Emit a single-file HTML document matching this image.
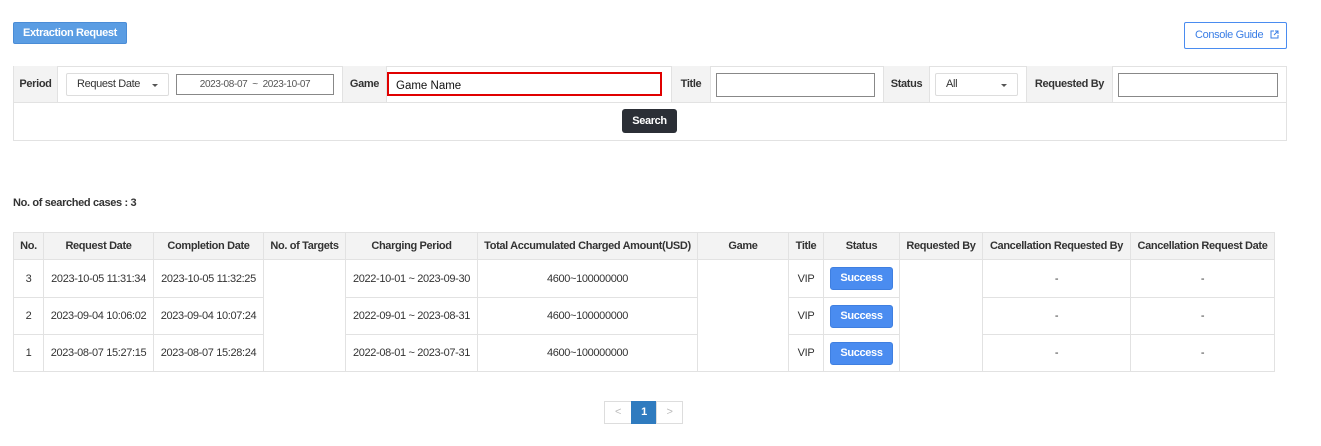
<!DOCTYPE html>
<html><head><meta charset="utf-8"><style>
*{box-sizing:border-box;margin:0;padding:0}
body{width:1321px;height:446px;background:#fff;font-family:"Liberation Sans",Arial,sans-serif;font-size:11px;color:#333;position:relative;overflow:hidden;letter-spacing:-0.35px}
.a{position:absolute}
.btnx{left:13px;top:22px;width:114px;height:22px;background:#5b9de3;border:1px solid #4a8cd6;border-radius:2px;color:#fff;font-weight:bold;text-align:center;line-height:20px}
.cg{left:1184px;top:22px;width:103px;height:27px;border:1px solid #4a8cf0;border-radius:2px;color:#3a7ee6;line-height:25px;padding-left:10px}
.box{left:13px;top:66px;width:1274px;height:75px;border:1px solid #e2e2e2}
.lab{top:66px;height:36px;background:#f3f3f3;border-right:1px solid #e2e2e2;border-left:1px solid #e2e2e2;font-weight:bold;line-height:36px;text-align:center}
.hl{left:13px;top:102px;width:1274px;height:1px;background:#e2e2e2}
.sel{border:1px solid #ddd;border-radius:2px;background:#fff;line-height:21px;padding-left:10px}
.inp{border:1px solid #888;background:#fff}
.car{position:absolute;right:10px;top:10px;border:3px solid transparent;border-top:3px solid #555;border-bottom:0}
.srch{left:622px;top:109px;width:55px;height:24px;background:#2b2f36;border-radius:3px;color:#fff;font-weight:bold;text-align:center;line-height:24px}
table{position:absolute;left:13px;top:232px;border-collapse:collapse;table-layout:fixed;width:1261px}
td,th{border:1px solid #e2e2e2;text-align:center;white-space:nowrap;overflow:hidden;padding:0}
th{background:#f3f3f3;height:27px;font-weight:bold}
td{height:37px}
.ok{display:inline-block;width:63px;height:23px;background:#4a8cf0;border:1px solid #3f7fe0;border-radius:3px;color:#fff;font-weight:bold;line-height:21px}
.pg{top:401px;height:23px;border:1px solid #ddd;line-height:21px;text-align:center;color:#bbb}
</style></head><body>
<div class="a btnx">Extraction Request</div>
<div class="a cg">Console Guide <svg width="9" height="9" viewBox="0 0 9 9" style="margin-left:4px;vertical-align:-1px"><path d="M4 1H1v7h7V5M5 1h3v3M8 1L4 5" stroke="#3a7ee6" fill="none" stroke-width="1"/></svg></div>
<div class="a box"></div>
<div class="a hl"></div>
<div class="a lab" style="left:13px;width:45px">Period</div>
<div class="a sel" style="left:66px;top:73px;width:103px;height:23px">Request Date<span class="car"></span></div>
<div class="a inp" style="left:176px;top:74px;width:158px;height:21px;line-height:19px;text-align:center;color:#555;font-size:10px">2023-08-07 &nbsp;~&nbsp; 2023-10-07</div>
<div class="a lab" style="left:342px;width:45px">Game</div>
<div class="a" style="left:387px;top:72px;width:275px;height:24px;border:2px solid #e00000;line-height:24px;padding-left:7px;color:#111;font-size:11.5px;letter-spacing:0">Game Name</div>
<div class="a lab" style="left:671px;width:40px">Title</div>
<div class="a inp" style="left:716px;top:73px;width:159px;height:24px"></div>
<div class="a lab" style="left:883px;width:47px">Status</div>
<div class="a sel" style="left:935px;top:73px;width:83px;height:23px">All<span class="car"></span></div>
<div class="a lab" style="left:1026px;width:87px">Requested By</div>
<div class="a inp" style="left:1118px;top:73px;width:160px;height:24px"></div>
<div class="a srch">Search</div>
<div class="a" style="left:13px;top:197px;font-weight:bold">No. of searched cases : 3</div>
<table>
<colgroup><col style="width:30px"><col style="width:110px"><col style="width:110px"><col style="width:82px"><col style="width:132px"><col style="width:220px"><col style="width:91px"><col style="width:35px"><col style="width:76px"><col style="width:83px"><col style="width:148px"><col style="width:144px"></colgroup>
<tr><th>No.</th><th>Request Date</th><th>Completion Date</th><th>No. of Targets</th><th>Charging Period</th><th>Total Accumulated Charged Amount(USD)</th><th>Game</th><th>Title</th><th>Status</th><th>Requested By</th><th>Cancellation Requested By</th><th>Cancellation Request Date</th></tr>
<tr style="height:38px"><td>3</td><td>2023-10-05 11:31:34</td><td>2023-10-05 11:32:25</td><td rowspan="3"></td><td>2022-10-01 ~ 2023-09-30</td><td>4600~100000000</td><td rowspan="3"></td><td>VIP</td><td><span class="ok">Success</span></td><td rowspan="3"></td><td>-</td><td>-</td></tr>
<tr><td>2</td><td>2023-09-04 10:06:02</td><td>2023-09-04 10:07:24</td><td>2022-09-01 ~ 2023-08-31</td><td>4600~100000000</td><td>VIP</td><td><span class="ok">Success</span></td><td>-</td><td>-</td></tr>
<tr><td>1</td><td>2023-08-07 15:27:15</td><td>2023-08-07 15:28:24</td><td>2022-08-01 ~ 2023-07-31</td><td>4600~100000000</td><td>VIP</td><td><span class="ok">Success</span></td><td>-</td><td>-</td></tr>
</table>
<div class="a pg" style="left:604px;width:28px">&lt;</div>
<div class="a pg" style="left:631px;width:26px;background:#2f7bbf;border-color:#2f7bbf;color:#fff;font-weight:bold">1</div>
<div class="a pg" style="left:656px;width:27px">&gt;</div>
</body></html>
